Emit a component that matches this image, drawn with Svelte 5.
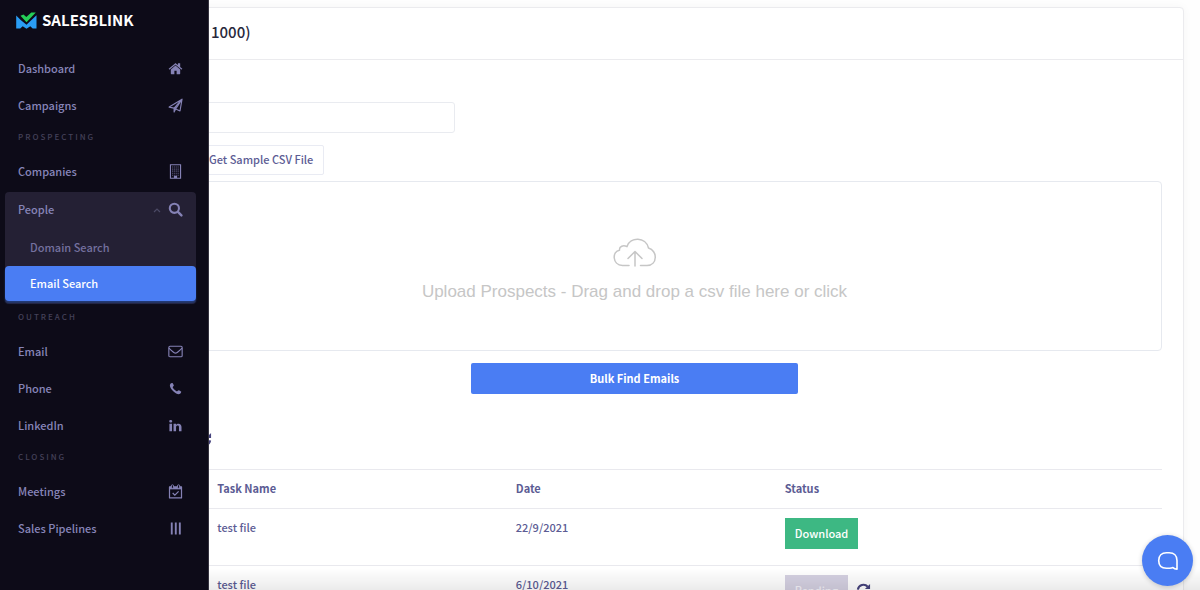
<script>
  const groups = [
    { title: '', items: [{ label: 'Dashboard', icon: 'home' }, { label: 'Campaigns', icon: 'plane' }] },
    { title: 'Prospecting', items: [
      { label: 'Companies', icon: 'building' },
      { label: 'People', icon: 'search', children: ['Domain Search', 'Email Search'] }
    ] },
    { title: 'Outreach', items: [
      { label: 'Email', icon: 'mail' },
      { label: 'Phone', icon: 'phone' },
      { label: 'LinkedIn', icon: 'linkedin' }
    ] },
    { title: 'Closing', items: [{ label: 'Meetings', icon: 'calendar' }, { label: 'Sales Pipelines', icon: 'bars' }] }
  ];
  const tasks = [
    { name: 'test file', date: '22/9/2021', status: 'Download' },
    { name: 'test file', date: '6/10/2021', status: 'Pending' }
  ];
  let active = $state('Email Search');
</script>

{#snippet icon(name)}
  <svg class="icon" viewBox="0 0 16 16" aria-hidden="true">
    {#if name === 'home'}
      <path fill="currentColor" d="M8 4.9 3 9v4.4c0 .3.2.6.6.6H6.800v-3.600h2.400V14h3.200c.4 0 .6-.3.6-.6V9zM15.300 8.200 13 6.300V2.600c0-.2-.1-.3-.3-.3h-1.800c-.2 0-.3.1-.3.3v1.700L8.800 2.800c-.5-.4-1.100-.4-1.600 0L.7 8.200l.6.8c.1.200.4.200.5.100L8 4l6.200 5.100c.1.100.4.100.5-.1z" />
    {:else if name === 'plane'}
      <path fill="none" stroke="currentColor" stroke-width="1.200" stroke-linejoin="round" d="M1.200 9.700 15 1.300l-2.200 12.500-4.600-2L6.500 15v-4.200zM6.500 10.800 15 1.300 8.200 11.800" />
      <path fill="currentColor" d="m6.500 10.800 4-3.800-2.300 4.800L6.500 15z" />
    {:else if name === 'building'}
      <path fill="none" stroke="currentColor" stroke-width="1.200" d="M2.600.8h10.800v14.400H2.600z" />
      <path fill="none" stroke="currentColor" stroke-width="1.200" stroke-dasharray="1.200 1" d="M4.400 3.200h7.400M4.400 5.400h7.400M4.400 7.600h7.400M4.400 9.800h7.400M4.400 12h7.400" opacity=".7" />
      <path fill="currentColor" d="M6.300 12.600h3.400V15H6.300z" />
    {:else if name === 'search'}
      <circle cx="6.800" cy="6.700" r="4.900" fill="none" stroke="currentColor" stroke-width="2.200" />
      <path stroke="currentColor" stroke-width="2.500" stroke-linecap="round" d="m10.600 10.500 3.700 3.800" />
    {:else if name === 'mail'}
      <rect x=".9" y="2.400" width="14.200" height="11.200" rx="1.200" fill="none" stroke="currentColor" stroke-width="1.200" />
      <path fill="none" stroke="currentColor" stroke-width="1.200" d="M1 4.500c1.400 1.700 3.400 3.100 5.300 4.600 1.100.9 2.300.9 3.400 0 1.900-1.500 3.900-2.900 5.300-4.600" />
    {:else if name === 'phone'}
      <path fill="currentColor" d="M14.100 11.300c0 .3-.1.900-.3 1.300-.3.800-1.400 1.400-2.500 1.400-1.400 0-3.500-1-5.700-3.100S2 6.500 2 4.900c0-1.100.6-2.200 1.400-2.500.4-.2 1-.3 1.300-.3.400.1 1 1.400 1.500 2.500.3.600-1.200 1.600-1.200 2.100s1.200 2 2 2.600c.8.800 2 1.700 2.500 1.700s1.400-1.400 2-1.200c.9.400 2.500 1.300 2.600 1.500z" />
    {:else if name === 'linkedin'}
      <path fill="currentColor" d="M1.500 6.200h2.800v7.900H1.500zM2.900 2c1 0 1.600.6 1.600 1.400S3.900 4.900 2.900 4.900s-1.600-.6-1.600-1.500S1.900 2 2.900 2zM5.900 6.200h2.700v1.100C9.200 6.500 10 6 11.200 6c2 0 3.200 1.300 3.200 3.600v4.500h-2.700V9.900c0-1.100-.4-1.800-1.400-1.800s-1.700.7-1.700 1.800v4.200H5.900z" />
    {:else if name === 'calendar'}
      <path fill="none" stroke="currentColor" stroke-width="1.300" stroke-linejoin="round" d="M1.600 3.100h12.800v11.800H1.600z" />
      <path fill="currentColor" d="M1.600 3h12.800v2.700H1.600z" />
      <rect x="3.600" y=".9" width="2.300" height="3.600" rx="1" fill="#0d0b18" stroke="currentColor" />
      <rect x="10.100" y=".9" width="2.300" height="3.600" rx="1" fill="#0d0b18" stroke="currentColor" />
      <path fill="none" stroke="currentColor" stroke-width="1.300" d="m5 9.600 2.300 2.300 4-4" />
    {:else if name === 'bars'}
      <path fill="currentColor" d="M3 1.500h2v13H3zM7.300 1.500h2v13h-2zM11.600 1.500h2v13h-2z" />
    {:else}
      <path fill="none" stroke="currentColor" stroke-width="2.200" d="M2 7a6 6 0 0 1 10.500-3M14 9a6 6 0 0 1-10.500 3" />
      <path fill="currentColor" d="M15 1v5.500H9.500zM1 15V9.500h5.500z" />
    {/if}
  </svg>
{/snippet}

<div class="page">
  <aside>
    <a class="brand" href="#home">
      <svg viewBox="0 0 21 17" aria-hidden="true">
        <path fill="#2a9df4" d="M.2 3.600 5 8.200l5.500 4.600 4.700-4.600 5.300-4.900v13.200h-3.800l-2.400-2.300-3.800 2.500-3.800-2.500-2.500 2.300h-4z" />
        <path fill="#25cf57" d="m4.500 3.800 3-1.200 2.800 2.500L15.300.5h4.500l-9.300 9.700z" />
      </svg>
      <span>SALESBLINK</span>
    </a>
    <nav>
      {#each groups as group}
        {#if group.title}<h2>{group.title}</h2>{/if}
        {#each group.items as item}
          {#if item.children}
            <div class="open">
              <a class="item" href="#people">
                <span>{item.label}</span>
                <svg class="caret" viewBox="0 0 8 6" aria-hidden="true"><path fill="none" stroke="currentColor" stroke-width="1.200" d="m1 5 3-3 3 3" /></svg>
                {@render icon(item.icon)}
              </a>
              {#each item.children as child}
                <a class="item child" class:active={active === child} href="#search" onclick={() => (active = child)}><span>{child}</span></a>
              {/each}
            </div>
          {:else}
            <a class="item" href="#{item.icon}"><span>{item.label}</span>{@render icon(item.icon)}</a>
          {/if}
        {/each}
      {/each}
    </nav>
  </aside>

  <main>
    <section class="card">
      <header><h1>1000)</h1></header>
      <div class="body">
        <input class="name" type="text" aria-label="Task name" />
        <div class="tools"><button class="sample">Get Sample CSV File</button></div>
        <button class="drop">
          <svg viewBox="0 0 44 30" aria-hidden="true">
            <path fill="none" stroke="currentColor" stroke-width="1.500" stroke-linecap="round" stroke-linejoin="round" d="M16 27.500H9.500C-1 27-1 13 6.500 12.200 6 8 10.500 7 14 8.600 17-1.500 33-1.500 35.500 10c9 2.500 9.500 17-1.500 17.500h-6.500M22 28V13.500m-7 7 7-7 7 7" />
          </svg>
          <span>Upload Prospects - Drag and drop a csv file here or click</span>
        </button>
        <button class="bulk">Bulk Find Emails</button>
        <div class="refresh">{@render icon('refresh')}</div>
        <table>
          <thead><tr><th></th><th>Task Name</th><th>Date</th><th>Status</th></tr></thead>
          <tbody>
            {#each tasks as task}
              <tr>
                <td></td>
                <td>{task.name}</td>
                <td>{task.date}</td>
                <td>
                  <div class="status">
                    {#if task.status === 'Pending'}
                      <button class="pending" disabled>Pending</button>
                      {@render icon('refresh')}
                    {:else}
                      <button class="download">Download</button>
                    {/if}
                  </div>
                </td>
              </tr>
            {/each}
          </tbody>
        </table>
      </div>
    </section>
  </main>

  <div class="fade"></div>
  <button class="chat" aria-label="Open chat">
    <svg viewBox="0 0 24 24" aria-hidden="true">
      <path fill="none" stroke="#fff" stroke-width="1.600" stroke-linejoin="round" d="M21 19.800V11.500c0-4.800-3-7.700-7.800-7.700h-2.700c-4.800 0-7.800 2.900-7.800 7.700s3 7.700 7.800 7.700h3.200c1.300 0 2.300-.2 3.300-.6 1 1 2.200 1.500 4 1.600z" />
    </svg>
  </button>
</div>

<style>
  :global(body) { margin: 0; overflow: hidden; }
  * { box-sizing: border-box; }
  .page {
    height: 100vh;
    overflow: hidden;
    background: #fefefe;
    color: #5c5c94;
    font: 500 11px/20px "Noto Sans CJK SC", "Noto Sans", sans-serif;
  }
  button, input { font: inherit; }
  button { cursor: pointer; }
  a { color: inherit; text-decoration: none; }
  h1, h2 { margin: 0; }
  .icon { width: 15px; height: 15px; flex: none; }

  aside {
    position: fixed;
    inset: 0 auto 0 0;
    z-index: 2;
    width: 209px;
    background: #0d0b18;
    border-right: 1px solid #35333f;
    color: #8785b8;
  }
  .brand {
    display: flex;
    align-items: center;
    gap: 5px;
    height: 50px;
    padding: 0 16px 10px;
    color: #fff;
    font-size: 15px;
    font-weight: 700;
  }
  .brand svg { width: 21px; height: 17px; }
  nav { padding: 0 12px 0 5px; }
  .item {
    display: flex;
    align-items: center;
    height: 37px;
    padding: 0 13px;
  }
  .item span { flex: 1; padding-bottom: 2px; }
  .caret { width: 8px; height: 6px; margin-right: 7px; color: #4b4965; }
  .item .icon { color: #8582b5; }
  h2 {
    height: 29px;
    padding: 0 13px;
    color: #444158;
    font-size: 8px;
    font-weight: 500;
    line-height: 26px;
    letter-spacing: 2px;
    text-transform: uppercase;
  }
  .open {
    margin-top: 2px;
    padding-bottom: 3px;
    border-radius: 4px;
    background: #242034;
  }
  .open .item:first-child { padding-bottom: 2px; }
  .child { padding-left: 25px; color: #74719f; }
  .child.active {
    height: 35px;
    border-radius: 4px;
    background: #4a7df3;
    box-shadow: 0 2px 2px #243c78;
    color: #fff;
  }

  main { padding: 7px 16px 0 85px; }
  .card {
    border: 1px solid #ebebee;
    border-radius: 4px;
    background: #fff;
    box-shadow: 0 0 10px #0000000a;
  }
  header { padding: 11px 21px 14px 125px; border-bottom: 1px solid #ebebee; }
  h1 { color: #28283c; font-size: 15px; font-weight: 500; line-height: 26px; }
  .body { display: flex; flex-direction: column; padding: 42px 21px; }
  .name {
    width: 33%;
    height: 31px;
    padding: 0 12px;
    border: 1px solid #e9ebf0;
    border-radius: 3px;
    background: #fff;
  }
  .tools { padding: 12px 0 6px 81px; }
  .sample {
    height: 30px;
    padding: 0 10px 2px 20px;
    border: 1px solid #e9ebf3;
    border-radius: 2px;
    background: #fff;
    color: inherit;
  }
  .drop {
    display: flex;
    flex-direction: column;
    align-items: center;
    gap: 12px;
    height: 170px;
    padding: 56px 0 0;
    border: 1px solid #e6e9ef;
    border-radius: 4px;
    background: #fff;
    color: #c6c6c6;
    font: 17px/24px "Liberation Sans", sans-serif;
  }
  .drop svg { width: 44px; height: 30px; }
  .bulk {
    align-self: center;
    width: 31%;
    height: 31px;
    margin-top: 12px;
    padding: 0 0 2px;
    border: 0;
    border-radius: 2px;
    background: #4a7df3;
    color: #fff;
    font-weight: 700;
  }
  .refresh { display: flex; height: 75px; padding: 38px 0 0 90px; color: #46437d; }
  table { width: 100%; table-layout: fixed; border-collapse: collapse; }
  th, td { padding: 8px 10px; border-top: 1px solid #e9e9ee; text-align: left; vertical-align: top; }
  th { height: 39px; font-weight: 700; }
  td { height: 57px; }
  th:nth-child(1) { width: 9.5%; }
  th:nth-child(2) { width: 28.3%; }
  th:nth-child(3) { width: 25.5%; }
  .status { display: flex; align-items: center; gap: 8px; padding-top: 1px; color: #46437d; }
  .status button { height: 31px; padding: 0 10px 2px; border: 0; }
  .status .download { background: #3db883; color: #fff; }
  .status .pending { background: #d5d1e2; color: #f5f3fa; }

  .fade {
    position: fixed;
    inset: auto 0 0;
    z-index: 1;
    height: 22px;
    background: linear-gradient(#0000, #00000014);
    pointer-events: none;
  }
  .chat {
    position: fixed;
    right: 7px;
    bottom: 4px;
    z-index: 3;
    display: grid;
    place-items: center;
    width: 51px;
    height: 51px;
    padding: 0;
    border: 0;
    border-radius: 50%;
    background: #4a7df3;
    box-shadow: 0 1px 5px #0003;
  }
  .chat svg { width: 24px; height: 24px; }
</style>
